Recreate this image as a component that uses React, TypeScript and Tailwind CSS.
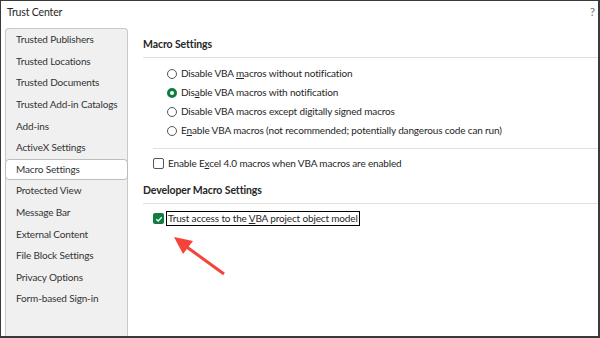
import React from "react"

const navItems = [
	"Trusted Publishers",
	"Trusted Locations",
	"Trusted Documents",
	"Trusted Add-in Catalogs",
	"Add-ins",
	"ActiveX Settings",
	"Macro Settings",
	"Protected View",
	"Message Bar",
	"External Content",
	"File Block Settings",
	"Privacy Options",
	"Form-based Sign-in",
]

function Radio({ checked }: { checked?: boolean }) {
	return checked ? (
		<span className="w-[10px] h-[10px] rounded-full border-[3px] border-[#107c41] bg-white shrink-0" />
	) : (
		<span className="w-[10px] h-[10px] rounded-full border border-[#555] bg-white shrink-0" />
	)
}

function Option({ children, checked }: { children: React.ReactNode; checked?: boolean }) {
	return (
		<div className="flex items-center h-[19px] gap-[4px]">
			<Radio checked={checked} />
			<span>{children}</span>
		</div>
	)
}

export default function App() {
	return (
		<div
			className="relative w-[600px] h-[338px] bg-white border-t border-l border-r-2 border-b-2 border-[#3a3a3a] flex flex-col overflow-hidden text-[10px] tracking-[-0.15px] text-[#262626] whitespace-nowrap"
			style={{ fontFamily: 'Lato, "Liberation Sans", sans-serif' }}
		>
			<div className="h-[27px] shrink-0 flex items-start justify-between pl-[6px] pr-[3px] pt-[3px]">
				<span className="leading-[16px] text-[10.5px]">Trust Center</span>
				<span className="leading-[16px] text-[#777] text-[12px]">?</span>
			</div>
			<div className="flex flex-1 min-h-0">
				<div className="ml-[4px] w-[123px] shrink-0 bg-[#f0f0f0] border border-b-0 border-[#c8c8c8] rounded-t-[4px] text-[#333]">
					{navItems.map((n) =>
						n === "Macro Settings" ? (
							<div
								key={n}
								className="h-[21.6px] flex items-center pl-[10px] bg-white border border-[#bdbdbd] rounded-[4px] -mx-px"
							>
								{n}
							</div>
						) : (
							<div key={n} className="h-[21.6px] flex items-center pl-[10px]">
								{n}
							</div>
						)
					)}
				</div>
				<div className="flex-1 pl-[15px] pt-[9px]">
					<div className="font-bold leading-[15px] text-[10.5px] tracking-[-0.1px]">Macro Settings</div>
					<div className="mt-[5px] h-px bg-[#e0e0e0]" />
					<div className="pl-[24px] mt-[6px]">
						<Option>
							Disable VBA <u>m</u>acros without notification
						</Option>
						<Option checked>
							Dis<u>a</u>ble VBA macros with notification
						</Option>
						<Option>
							Disable VBA macros except di<u>g</u>itally signed macros
						</Option>
						<Option>
							E<u>n</u>able VBA macros (not recommended; potentially dangerous code can run)
						</Option>
					</div>
					<div className="ml-[10px] mt-[8px] h-px bg-[#e0e0e0]" />
					<div className="pl-[10px] mt-[5px] flex items-center h-[19px] gap-[4px]">
						<span className="w-[11px] h-[11px] rounded-[2px] border border-[#555] bg-white shrink-0" />
						<span>
							Enable E<u>x</u>cel 4.0 macros when VBA macros are enabled
						</span>
					</div>
					<div className="font-bold leading-[15px] mt-[10px] text-[10.5px] tracking-[-0.1px]">
						Developer Macro Settings
					</div>
					<div className="mt-[5px] h-px bg-[#e0e0e0]" />
					<div className="pl-[10px] mt-[6px] flex items-center h-[17px] gap-[2px]">
						<span className="w-[11px] h-[11px] rounded-[2px] bg-[#107c41] shrink-0 flex items-center justify-center">
							<svg width="8" height="8" viewBox="0 0 8 8">
								<path d="M1.3 4.2 L3.2 6 L6.7 2.2" fill="none" stroke="white" strokeWidth="1.3" />
							</svg>
						</span>
						<span className="border border-black px-px leading-[13px]">
							Trust access to the <u>V</u>BA project object model
						</span>
					</div>
				</div>
			</div>
			<svg className="absolute left-0 top-0 pointer-events-none" width="600" height="338">
				<line x1="223" y1="273" x2="183" y2="244" stroke="#f4433a" strokeWidth="3" />
				<polygon points="173,236 192,240 182,253" fill="#f4433a" />
			</svg>
		</div>
	)
}
